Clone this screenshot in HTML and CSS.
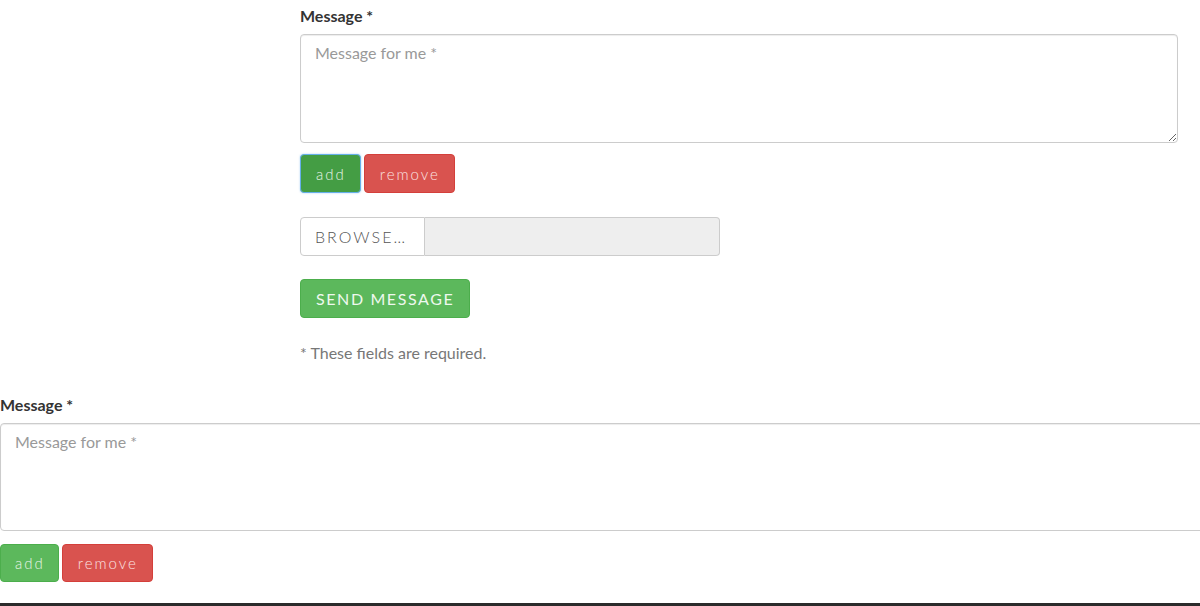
FILE: index.html
```html
<!DOCTYPE html>
<html lang="en">
<head>
    <meta charset="UTF-8">
    <meta name="viewport" content="width=device-width, initial-scale=1.0">
    <title>Contact Form</title>
    <link rel="stylesheet" href="styles.css">
</head>
<body>
    <div class="form-wrap">
        <div class="form-group">
            <label class="field-label">Message *</label>
            <textarea class="message-box" placeholder="Message for me *"></textarea>
        </div>
        <div class="btn-row">
            <button class="btn btn-add focused">add</button>
            <button class="btn btn-remove">remove</button>
        </div>
        <div class="file-group">
            <span class="browse-btn">Browse&hellip;</span>
            <input type="text" class="file-name" readonly>
        </div>
        <button class="send-btn">Send Message</button>
        <p class="required-note">* These fields are required.</p>
    </div>

    <div class="form-clone">
        <div class="form-group">
            <label class="field-label">Message *</label>
            <textarea class="message-box wide" placeholder="Message for me *"></textarea>
        </div>
        <div class="btn-row">
            <button class="btn btn-add">add</button>
            <button class="btn btn-remove">remove</button>
        </div>
    </div>
    <div class="page-edge"></div>
</body>
</html>
```

FILE: styles.css
```css
body {
    font-family: Lato, "Open Sans", sans-serif;
    margin: 0;
    color: #333;
    background: #fff;
    overflow: hidden;
    height: 606px;
    position: relative;
}
.form-wrap {
    margin-left: 300px;
    width: 878px;
    padding-top: 6px;
}
.form-group {
    display: flex;
    flex-direction: column;
}
.field-label {
    font-size: 16px;
    font-weight: 700;
    line-height: 20px;
    margin-bottom: 8px;
}
.message-box {
    font-family: Lato, sans-serif;
    font-size: 16px;
    height: 109px;
    padding: 8px 14px;
    border: 1px solid #ccc;
    border-radius: 4px;
    box-sizing: border-box;
    box-shadow: inset 0 1px 1px rgba(0, 0, 0, 0.075);
    color: #555;
}
.message-box::placeholder {
    color: #999;
}
.message-box.wide {
    width: 1220px;
    height: 108px;
}
.btn-row {
    display: flex;
    gap: 3px;
    margin-top: 11px;
}
.btn {
    font-family: Lato, sans-serif;
    font-size: 15px;
    font-weight: 300;
    letter-spacing: 2px;
    height: 39px;
    border: 1px solid transparent;
    border-radius: 4px;
    color: #e8f5e8;
    cursor: pointer;
}
.btn-add {
    background-color: #5cb85c;
    border-color: #4cae4c;
    padding: 0 14px 0 15px;
}
.btn-add.focused {
    background-color: #449d44;
    border-color: #66afe9;
    box-shadow: 0 0 2px rgba(102, 175, 233, 0.6);
}
.btn-remove {
    background-color: #d9534f;
    border-color: #d43f3a;
    color: #fbe3e2;
    padding: 0 14px 0 15px;
}
.file-group {
    display: flex;
    width: 420px;
    height: 39px;
    margin-top: 24px;
}
.browse-btn {
    display: flex;
    align-items: center;
    padding: 0 14px;
    width: 125px;
    box-sizing: border-box;
    border: 1px solid #ccc;
    border-radius: 4px 0 0 4px;
    font-size: 16px;
    font-weight: 300;
    letter-spacing: 2px;
    text-transform: uppercase;
    color: #555;
    background: #fff;
}
.file-name {
    flex: 1;
    border: 1px solid #ccc;
    border-left: none;
    border-radius: 0 4px 4px 0;
    background: #eee;
}
.send-btn {
    display: block;
    margin-top: 23px;
    height: 39px;
    padding: 0 15px 0 15px;
    font-family: Lato, sans-serif;
    font-size: 16px;
    font-weight: 400;
    letter-spacing: 1.6px;
    text-transform: uppercase;
    color: #eef8ee;
    background-color: #5cb85c;
    border: 1px solid #4cae4c;
    border-radius: 4px;
    cursor: pointer;
}
.required-note {
    margin: 25px 0 0;
    font-size: 16px;
    line-height: 20px;
    color: #777;
}
.form-clone {
    margin-top: 32px;
}
.form-clone .btn-row {
    margin-top: 13px;
}
.form-clone .btn {
    height: 38px;
}
.form-clone .btn-add {
    padding: 0 13px 0 14px;
}
.page-edge {
    position: absolute;
    left: 0;
    right: 0;
    bottom: 0;
    height: 3px;
    background: #2b2b2b;
}
```
